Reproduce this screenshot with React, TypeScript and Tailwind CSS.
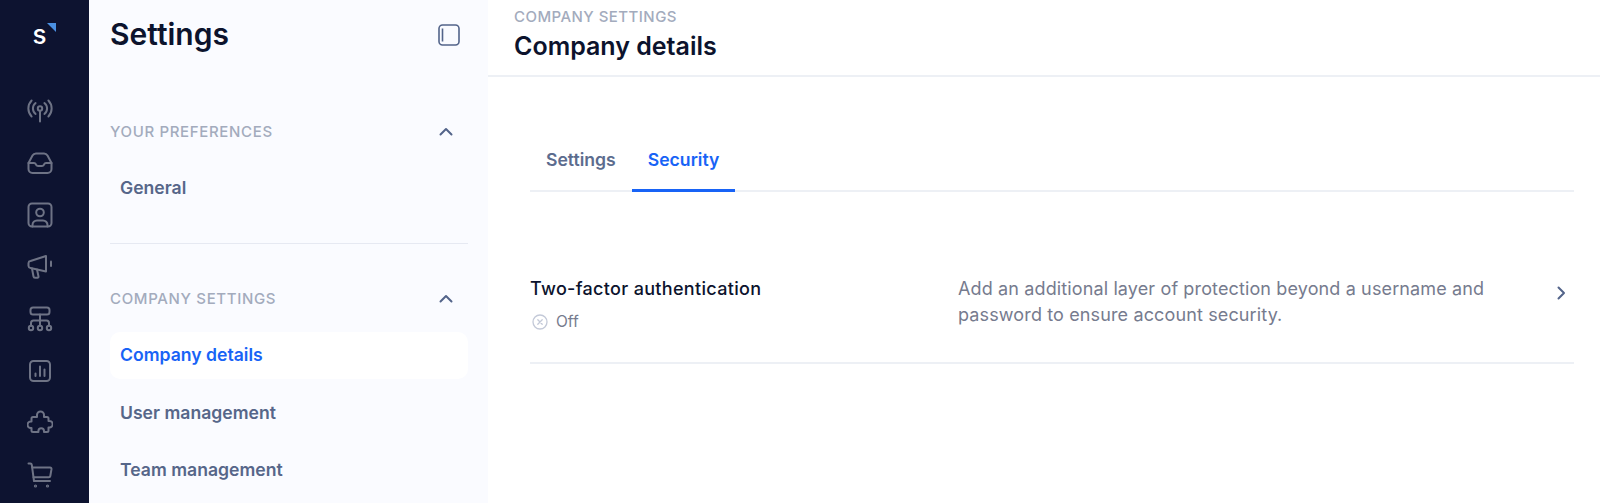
const railIcon = "w-[26px] h-[26px] text-[#6e7385]";

function RailIcons() {
  return (
    <div className="flex flex-col items-center gap-[26px] mt-[26px]">
      <svg viewBox="0 0 26 26" fill="none" stroke="currentColor" strokeWidth="2" strokeLinecap="round" strokeLinejoin="round" className={railIcon}>
        <circle cx="13" cy="10.5" r="2.2" />
        <path d="M13 12.7V23.5" />
        <path d="M8.6 16a7 7 0 0 1 0-11" />
        <path d="M17.4 5a7 7 0 0 1 0 11" />
        <path d="M4.6 18.5a11.5 11.5 0 0 1 0-16" />
        <path d="M21.4 2.5a11.5 11.5 0 0 1 0 16" />
      </svg>
      <svg viewBox="0 0 26 26" fill="none" stroke="currentColor" strokeWidth="2" strokeLinecap="round" strokeLinejoin="round" className={railIcon}>
        <path d="M1.5 13 5.5 5.5A4 4 0 0 1 9 3.5h8a4 4 0 0 1 3.5 2l4 7.5v6a4 4 0 0 1-4 4h-15a4 4 0 0 1-4-4z" />
        <path d="M1.5 13H7a2 2 0 0 1 1.8 1.2A2.5 2.5 0 0 0 11 16h4a2.5 2.5 0 0 0 2.2-1.8A2 2 0 0 1 19 13h5.5" />
      </svg>
      <svg viewBox="0 0 26 26" fill="none" stroke="currentColor" strokeWidth="2" strokeLinecap="round" strokeLinejoin="round" className={railIcon}>
        <rect x="1.5" y="1.5" width="23" height="23" rx="3.5" />
        <circle cx="13" cy="10.5" r="3.8" />
        <path d="M5.5 24.5V23a4.5 4.5 0 0 1 4.5-4.5h6a4.5 4.5 0 0 1 4.5 4.5v1.5" />
      </svg>
      <svg viewBox="0 0 26 26" fill="none" stroke="currentColor" strokeWidth="2" strokeLinecap="round" strokeLinejoin="round" className={railIcon}>
        <path d="M3.5 7 19 2v15.5L3.5 14a2.2 2.2 0 0 1-2-2V9a2.2 2.2 0 0 1 2-2z" />
        <path d="m5 14.5 1.5 8A1.5 1.5 0 0 0 8 23.700h2.500a1 1 0 0 0 1-1.200L10 15.500" />
        <path d="M24 7.500V12" />
      </svg>
      <svg viewBox="0 0 26 26" fill="none" stroke="currentColor" strokeWidth="2" strokeLinecap="round" strokeLinejoin="round" className={railIcon}>
        <rect x="3.5" y="1.5" width="19" height="7" rx="2.5" />
        <path d="M13 8.5v11M4 19.5V17a2.5 2.5 0 0 1 2.5-2.5h13A2.5 2.5 0 0 1 22 17v2.5" />
        <circle cx="4" cy="22" r="2.2" />
        <circle cx="13" cy="22" r="2.2" />
        <circle cx="22" cy="22" r="2.2" />
      </svg>
      <svg viewBox="0 0 26 26" fill="none" stroke="currentColor" strokeWidth="2" strokeLinecap="round" strokeLinejoin="round" className={railIcon}>
        <rect x="3" y="3" width="20" height="20" rx="3.5" />
        <path d="M8.5 18v-2.5M13 18V8.5M17.5 18v-6.5" />
      </svg>
      <svg viewBox="0 0 26 26" fill="none" stroke="currentColor" strokeWidth="2" strokeLinecap="round" strokeLinejoin="round" className={railIcon}>
        <path d="M10 5a3.5 3.5 0 0 1 7 0v2h3a1.5 1.5 0 0 1 1.5 1.500V11h1a3.200 3.200 0 0 1 0 6.400h-1v3.100A1.500 1.500 0 0 1 20 22h-3v-1a2.800 2.800 0 0 0-5.600 0v1H6a1.500 1.500 0 0 1-1.500-1.500V18H3.700a3.200 3.200 0 0 1 0-6.400h.8V8.500A1.500 1.500 0 0 1 6 7h4z" />
      </svg>
      <svg viewBox="0 0 26 26" fill="none" stroke="currentColor" strokeWidth="2" strokeLinecap="round" strokeLinejoin="round" className={railIcon}>
        <path d="M1.5 1.5h1.800A1.500 1.500 0 0 1 4.800 2.800L7 19h16" />
        <path d="M5.300 5.500H23a1.500 1.500 0 0 1 1.500 1.700L23.300 14a1.500 1.500 0 0 1-1.500 1.300H6.500" />
        <circle cx="8.5" cy="24" r="0.6" />
        <circle cx="20.5" cy="24" r="0.6" />
      </svg>
    </div>
  );
}

function Chevron() {
  return (
    <svg viewBox="0 0 14 9" fill="none" stroke="#53648a" strokeWidth="2" strokeLinecap="round" strokeLinejoin="round" className="w-[14px] h-[9px]">
      <path d="M1.5 7.5 7 2l5.5 5.5" />
    </svg>
  );
}

function SectionLabel({ label }: { label: string }) {
  return (
    <div className="flex items-center justify-between pr-[15px] h-5">
      <span className="mt-[2px] text-[15px] font-medium tracking-[0.65px] text-[#a3abbd]">{label}</span>
      <Chevron />
    </div>
  );
}

function NavItem({ label, active }: { label: string; active?: boolean }) {
  return (
    <div className={`h-[47px] flex items-center px-[10px] rounded-[10px] text-[17.6px] font-semibold ${active ? "bg-white text-[#1863f6]" : "text-[#566689]"}`}>
      {label}
    </div>
  );
}

export default function App() {
  return (
    <div className="flex h-[503px] overflow-hidden bg-white font-['Inter',sans-serif]">
      <aside className="w-[89px] shrink-0 bg-[#0d1330] flex flex-col items-center pr-[10px]">
        <div className="relative h-[72px] w-full flex items-center justify-center">
          <span className="text-white text-[26px] font-medium leading-none -mt-[2px]">s</span>
          <svg viewBox="0 0 9 9" className="absolute left-[47px] top-[23px] w-[9px] h-[9px]">
            <path d="M0 0h9v9z" fill="#4a90e2" />
          </svg>
        </div>
        <RailIcons />
      </aside>

      <nav className="w-[399px] shrink-0 bg-[#fafbff] pl-[21px] pr-[20px]">
        <div className="flex items-center justify-between h-[68px] pr-[7px]">
          <h1 className="text-[30px] font-semibold text-[#0c132d]">Settings</h1>
          <svg viewBox="0 0 24 24" fill="none" stroke="#53648a" strokeWidth="1.6" className="w-6 h-6 mt-[2px]">
            <rect x="2" y="2" width="20" height="20" rx="3.5" />
            <path d="M5.5 5.5v13" />
          </svg>
        </div>
        <div className="mt-[53px]">
          <SectionLabel label="YOUR PREFERENCES" />
        </div>
        <div className="mt-[24px]">
          <NavItem label="General" />
        </div>
        <div className="border-t border-[#e6e9f2] mt-[31px]" />
        <div className="mt-[44px]">
          <SectionLabel label="COMPANY SETTINGS" />
        </div>
        <div className="mt-[24px] flex flex-col gap-[10.5px]">
          <NavItem label="Company details" active />
          <NavItem label="User management" />
          <NavItem label="Team management" />
        </div>
      </nav>

      <main className="flex-1 min-w-0">
        <header className="h-[77px] border-b-2 border-[#edf0f5] pl-[26px] pt-[8px]">
          <div className="text-[15px] font-medium tracking-[0.45px] text-[#a3abbd] leading-[18px]">COMPANY SETTINGS</div>
          <div className="text-[25px] font-semibold text-[#0c132d] leading-[30px] mt-[5px]">Company details</div>
        </header>

        <div className="pl-[42px] pr-[26px]">
          <div className="flex h-[115px] items-end border-b-2 border-[#edf0f5]">
            <div className="px-4 h-[55px] -mb-[2px] pt-[10px] text-[17.6px] font-semibold text-[#5c6c8e]">Settings</div>
            <div className="px-4 h-[55px] -mb-[2px] pt-[10px] text-[17.6px] font-semibold text-[#1863f6] border-b-[3px] border-[#1863f6]">Security</div>
          </div>

          <div className="flex items-start h-[172px] border-b-2 border-[#edf0f5] pt-[84px]">
            <div className="w-[428px] shrink-0">
              <div className="text-[18px] font-medium text-[#0c132d] leading-[26px] tracking-[0.32px]">Two-factor authentication</div>
              <div className="flex items-center gap-[8px] mt-[10px]">
                <svg viewBox="0 0 16 16" fill="none" stroke="#c3c9d8" strokeWidth="1.3" strokeLinecap="round" className="w-4 h-4 ml-[2px]">
                  <circle cx="8" cy="8" r="7" />
                  <path d="m5.8 5.8 4.4 4.4M10.2 5.8l-4.4 4.4" />
                </svg>
                <span className="text-[15.5px] text-[#767b8e] leading-[20px]">Off</span>
              </div>
            </div>
            <p className="w-[565px] text-[18px] tracking-[0.13px] leading-[26px] text-[#767b8e]">
              Add an additional layer of protection beyond a username and password to ensure account security.
            </p>
            <div className="flex-1 flex justify-end pr-[8px] pt-[10px]">
              <svg viewBox="0 0 10 14" fill="none" stroke="#53648a" strokeWidth="2" strokeLinecap="round" strokeLinejoin="round" className="w-[10px] h-[14px]">
                <path d="m2.5 1.5 5.5 5.5-5.5 5.5" />
              </svg>
            </div>
          </div>
        </div>
      </main>
    </div>
  );
}
